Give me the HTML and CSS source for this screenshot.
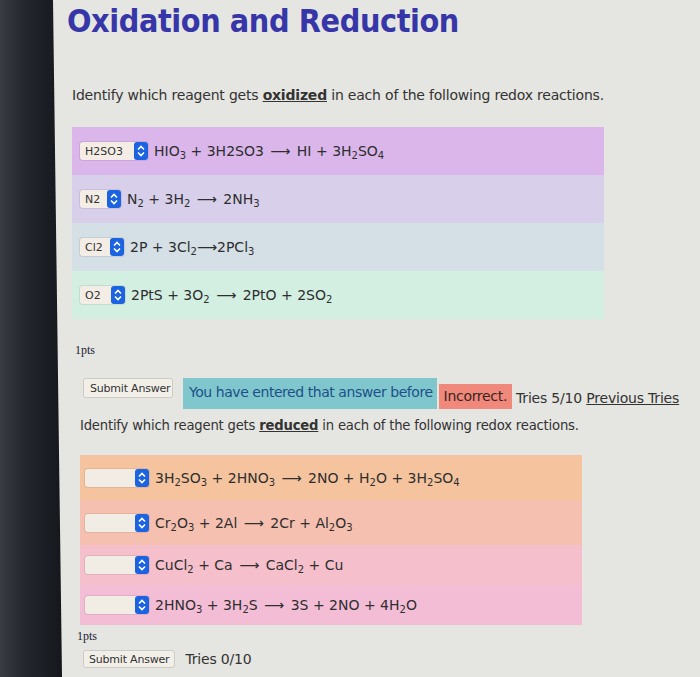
FILE: index.html
```html
<!DOCTYPE html>
<html>
<head>
<meta charset="utf-8">
<link rel="stylesheet" href="styles.css">
</head>
<body>
<div class="frame">
  <div class="bezel"></div>
  <div class="page">
    <h1 class="title">Oxidation and Reduction</h1>
    <p class="prompt">Identify which reagent gets <b class="key">oxidized</b> in each of the following redox reactions.</p>

    <div class="list list-ox">
      <div class="row r1">
        <span class="sel w1"><span class="val">H2SO3</span><span class="arr"><svg viewBox="0 0 14 18" width="14" height="18"><path d="M4 7.5 L7 4.5 L10 7.5 M4 10.5 L7 13.5 L10 10.5" fill="none" stroke="#fff" stroke-width="1.6"/></svg></span></span>
        <span class="eq">HIO<sub>3</sub> + 3H2SO3 <span class="to">⟶</span> HI + 3H<sub>2</sub>SO<sub>4</sub></span>
      </div>
      <div class="row r2">
        <span class="sel w2"><span class="val">N2</span><span class="arr"><svg viewBox="0 0 14 18" width="14" height="18"><path d="M4 7.5 L7 4.5 L10 7.5 M4 10.5 L7 13.5 L10 10.5" fill="none" stroke="#fff" stroke-width="1.6"/></svg></span></span>
        <span class="eq">N<sub>2</sub> + 3H<sub>2</sub> <span class="to">⟶</span> 2NH<sub>3</sub></span>
      </div>
      <div class="row r3">
        <span class="sel w3"><span class="val">Cl2</span><span class="arr"><svg viewBox="0 0 14 18" width="14" height="18"><path d="M4 7.5 L7 4.5 L10 7.5 M4 10.5 L7 13.5 L10 10.5" fill="none" stroke="#fff" stroke-width="1.6"/></svg></span></span>
        <span class="eq">2P + 3Cl<sub>2</sub><span class="to tight">⟶</span>2PCl<sub>3</sub></span>
      </div>
      <div class="row r4">
        <span class="sel w4"><span class="val">O2</span><span class="arr"><svg viewBox="0 0 14 18" width="14" height="18"><path d="M4 7.5 L7 4.5 L10 7.5 M4 10.5 L7 13.5 L10 10.5" fill="none" stroke="#fff" stroke-width="1.6"/></svg></span></span>
        <span class="eq">2PtS + 3O<sub>2</sub> <span class="to">⟶</span> 2PtO + 2SO<sub>2</sub></span>
      </div>
    </div>

    <div class="pts pts-1">1pts</div>

    <div class="answer-bar">
      <button class="submit">Submit Answer</button>
      <span class="note">You have entered that answer before</span>
      <span class="bad">Incorrect.</span>
      <span class="tries">Tries 5/10 <a class="prev">Previous Tries</a></span>
    </div>

    <div class="q2">
      <p class="prompt prompt-2">Identify which reagent gets <b class="key">reduced</b> in each of the following redox reactions.</p>

      <div class="list list-red">
        <div class="row s1">
          <span class="sel empty"><span class="val"></span><span class="arr"><svg viewBox="0 0 14 18" width="14" height="18"><path d="M4 7.5 L7 4.5 L10 7.5 M4 10.5 L7 13.5 L10 10.5" fill="none" stroke="#fff" stroke-width="1.6"/></svg></span></span>
          <span class="eq">3H<sub>2</sub>SO<sub>3</sub> + 2HNO<sub>3</sub> <span class="to">⟶</span> 2NO + H<sub>2</sub>O + 3H<sub>2</sub>SO<sub>4</sub></span>
        </div>
        <div class="row s2">
          <span class="sel empty"><span class="val"></span><span class="arr"><svg viewBox="0 0 14 18" width="14" height="18"><path d="M4 7.5 L7 4.5 L10 7.5 M4 10.5 L7 13.5 L10 10.5" fill="none" stroke="#fff" stroke-width="1.6"/></svg></span></span>
          <span class="eq">Cr<sub>2</sub>O<sub>3</sub> + 2Al <span class="to">⟶</span> 2Cr + Al<sub>2</sub>O<sub>3</sub></span>
        </div>
        <div class="row s3">
          <span class="sel empty"><span class="val"></span><span class="arr"><svg viewBox="0 0 14 18" width="14" height="18"><path d="M4 7.5 L7 4.5 L10 7.5 M4 10.5 L7 13.5 L10 10.5" fill="none" stroke="#fff" stroke-width="1.6"/></svg></span></span>
          <span class="eq">CuCl<sub>2</sub> + Ca <span class="to">⟶</span> CaCl<sub>2</sub> + Cu</span>
        </div>
        <div class="row s4">
          <span class="sel empty"><span class="val"></span><span class="arr"><svg viewBox="0 0 14 18" width="14" height="18"><path d="M4 7.5 L7 4.5 L10 7.5 M4 10.5 L7 13.5 L10 10.5" fill="none" stroke="#fff" stroke-width="1.6"/></svg></span></span>
          <span class="eq">2HNO<sub>3</sub> + 3H<sub>2</sub>S <span class="to">⟶</span> 3S + 2NO + 4H<sub>2</sub>O</span>
        </div>
      </div>

      <div class="pts pts-2">1pts</div>
      <div class="answer-bar bar-2">
        <button class="submit">Submit Answer</button>
        <span class="tries">Tries 0/10</span>
      </div>
    </div>
  </div>
</div>
</body>
</html>
```

FILE: styles.css
```css
html, body {
  margin: 0;
  padding: 0;
  height: 100%;
}
body {
  background: #e5e5e1;
  font-family: "DejaVu Sans", Verdana, sans-serif;
  color: #333;
  overflow: hidden;
}
.frame {
  display: flex;
  height: 677px;
}
.bezel {
  width: 62px;
  flex: none;
  background: linear-gradient(90deg, #3a3c44 0%, #23262d 40%, #15171d 100%);
  clip-path: polygon(0 0, 53px 0, 62px 100%, 0 100%);
}
.page {
  flex: 1;
  padding-left: 5px;
}
.title {
  margin: 0;
  font-family: "DejaVu Sans Condensed", "DejaVu Sans", sans-serif;
  font-stretch: condensed;
  font-size: 32px;
  font-weight: bold;
  line-height: 42px;
  color: #3636a8;
  letter-spacing: -0.4px;
}
.prompt {
  margin: 43px 0 0 5px;
  font-size: 14px;
  line-height: 20px;
  color: #333;
  letter-spacing: -0.2px;
}
.key {
  text-decoration: underline;
  color: #333;
}
.list {
  display: flex;
  flex-direction: column;
}
.list-ox {
  margin: 22px 0 0 5px;
  width: 532px;
}
.row {
  display: flex;
  align-items: center;
  height: 48px;
  padding-left: 8px;
  gap: 6px;
  font-size: 14px;
  color: #2e2e2e;
}
.r1 { background: #dab6eb; }
.r2 { background: #d8d0ea; }
.r3 { background: #d4dfe6; }
.r4 { background: #d3efe1; }
.sel {
  display: inline-flex;
  align-items: stretch;
  height: 18px;
  border-radius: 3px;
  background: #f3ede6;
  box-shadow: 0 0 0 1px rgba(0,0,0,0.08);
  font-size: 11px;
  color: #333;
}
.val {
  flex: 1;
  display: flex;
  align-items: center;
  padding-left: 5px;
}
.arr {
  width: 14px;
  background: #1b63e0;
  border-radius: 3px;
  display: flex;
  align-items: center;
}
.w1 { width: 68px; }
.w2 { width: 41px; }
.w3 { width: 44px; }
.w4 { width: 45px; }
.empty { width: 64px; background: #f2ede4; }
.eq {
  white-space: nowrap;
}
.eq sub {
  font-size: 10px;
  vertical-align: -3px;
  line-height: 0;
}
.to {
  display: inline-block;
  margin: 0 2px;
  font-size: 14px;
}
.tight { margin: 0; }
.pts {
  font-family: "Liberation Serif", serif;
  font-size: 12px;
  color: #223;
}
.pts-1 {
  margin: 24px 0 0 8px;
}
.answer-bar {
  display: flex;
  align-items: flex-end;
  margin: 20px 0 0 16px;
  white-space: nowrap;
}
.submit {
  font-family: "DejaVu Sans", sans-serif;
  font-size: 11px;
  color: #333;
  background: #f2efe9;
  border: 1px solid #cfcac2;
  border-radius: 3px;
  padding: 1px 6px;
  height: 20px;
  width: 90px;
  white-space: nowrap;
  align-self: flex-start;
  letter-spacing: -0.2px;
}
.note {
  margin-left: 10px;
  background: #7fc7cc;
  color: #1e4f8a;
  font-size: 14px;
  letter-spacing: -0.45px;
  padding: 6px 4px 9px 6px;
}
.bad {
  margin-left: 2px;
  background: #f0887c;
  color: #3a2420;
  font-size: 14px;
  letter-spacing: -0.3px;
  padding: 4px 5px 5px 5px;
}
.tries {
  margin-left: 4px;
  font-size: 14px;
  padding-bottom: 3px;
  color: #333;
  letter-spacing: -0.2px;
}
.prev {
  text-decoration: underline;
  color: #333;
}
.q2 {
  padding-left: 8px;
}
.prompt-2 {
  margin: 7px 0 0 5px;
  font-size: 13.2px;
}
.list-red {
  margin: 19px 0 0 5px;
  width: 502px;
}
.list-red .row { height: 43px; padding-left: 5px; }
.s1 { background: #f5c49f; height: 45px !important; }
.s2 { background: #f5c0b0; height: 45px !important; }
.s3 { background: #f5bfcb; height: 40px !important; }
.s4 { background: #f4bdd6; height: 40px !important; }
.pts-2 {
  margin: 4px 0 0 2px;
}
.bar-2 {
  margin: 6px 0 0 8px;
  align-items: center;
}
.bar-2 .submit { width: auto; height: 18px; padding: 0 5px; }
.bar-2 .tries { margin-left: 10px; padding: 0; }
```
